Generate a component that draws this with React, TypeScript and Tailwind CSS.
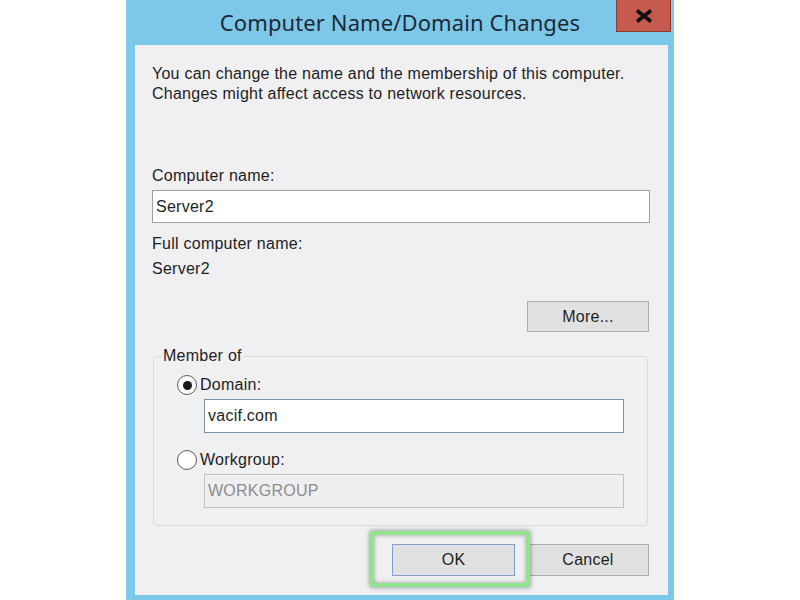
import React from "react";

function Radio({ checked }: { checked: boolean }) {
  return (
    <span className="w-[20px] h-[20px] rounded-full border border-[#5a5a5a] bg-white flex items-center justify-center shrink-0">
      {checked && <span className="w-[9px] h-[9px] rounded-full bg-[#1a1a1a]" />}
    </span>
  );
}

export default function App() {
  return (
    <div className="w-[800px] h-[600px] bg-white flex justify-center font-['Liberation_Sans',Arial,sans-serif] text-[#1e1e1e]">
      <div className="w-[548px] h-[600px] bg-[#7dc8e8] flex flex-col">
        <div className="h-[45px] grid grid-cols-[1fr_auto_1fr] items-start">
          <div />
          <div className="pt-[8px] text-[22px] leading-[29px] tracking-[0.1px] text-[#1d2a36] font-['Noto_Sans',sans-serif] whitespace-nowrap">
            Computer Name/Domain Changes
          </div>
          <div className="justify-self-end mr-[3px] w-[55px] h-[32px] bg-[#c65a4f] border border-[#8c3c35] border-t-0 flex items-center justify-center">
            <svg width="18" height="14" viewBox="0 0 18 14">
              <path d="M2 1.5 L16 12.5 M16 1.5 L2 12.5" stroke="#111" strokeWidth="3.6" fill="none" />
            </svg>
          </div>
        </div>
        <div className="ml-[9px] mr-[6px] mb-[5px] flex-1 bg-[#f0eff2] flex flex-col pl-[17px] pr-[18px] pt-[19px] text-[16px] tracking-[0.25px] leading-[20px]">
          <p className="whitespace-nowrap">You can change the name and the membership of this computer.</p>
          <p>Changes might affect access to network resources.</p>
          <p className="mt-[62px]">Computer name:</p>
          <div className="mt-[4px] h-[33px] bg-white border border-[#a0a0a0] flex items-center px-[3px]">Server2</div>
          <p className="mt-[11px]">Full computer name:</p>
          <p className="mt-[5px]">Server2</p>
          <div className="mt-[22px] flex justify-end pr-[1px]">
            <button className="w-[122px] h-[31px] bg-[#e1e1e1] border border-[#adadad] text-center">More...</button>
          </div>
          <fieldset className="mt-[14px] ml-[1px] mr-[2px] h-[180px] border border-[#dcdcdf] rounded-[3px] px-[23px] pb-[16px]">
            <legend className="-ml-[15px] px-[1px] leading-[20px]">Member of</legend>
            <div className="mt-[9px] flex items-center gap-[3px] h-[20px]">
              <Radio checked />
              <span>Domain:</span>
            </div>
            <div className="mt-[4px] ml-[27px] h-[34px] bg-white border border-[#7a8fa9] flex items-center px-[3px]">vacif.com</div>
            <div className="mt-[17px] flex items-center gap-[3px] h-[20px]">
              <Radio checked={false} />
              <span>Workgroup:</span>
            </div>
            <div className="mt-[4px] ml-[27px] h-[34px] bg-[#efeef1] border border-[#c3c3c3] flex items-center px-[3px] text-[#8d8d8d]">WORKGROUP</div>
          </fieldset>
          <div className="mt-[18px] flex justify-end gap-[12px] pr-[1px]">
            <div className="relative">
              <button className="w-[123px] h-[32px] bg-[#e1e1e1] border border-[#7d9fcc] text-center">OK</button>
              <div className="absolute left-[-22px] top-[-13px] w-[160px] h-[56px] border-4 border-[#8fe48d] shadow-[0_0_5px_rgba(0,0,0,0.45),inset_0_0_4px_rgba(0,0,0,0.35)] pointer-events-none" />
            </div>
            <button className="w-[122px] h-[32px] bg-[#e1e1e1] border border-[#adadad] text-center">Cancel</button>
          </div>
        </div>
      </div>
    </div>
  );
}
